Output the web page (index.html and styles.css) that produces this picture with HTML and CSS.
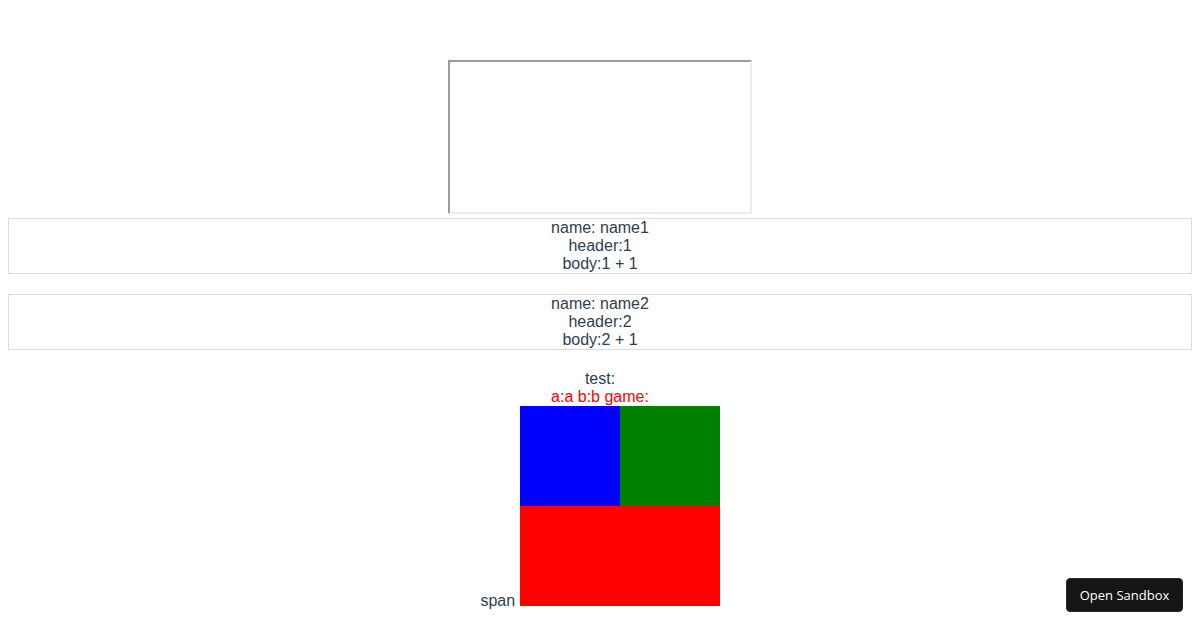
FILE: index.html
```html
<!DOCTYPE html>
<html>
<head>
<meta charset="utf-8">
<link rel="stylesheet" href="styles.css">
</head>
<body>
<div class="app">
  <div class="frame-line"><span class="frame"></span></div>
  <div class="card">
    <div>name: name1</div>
    <div>header:1</div>
    <div>body:1 + 1</div>
  </div>
  <div class="card">
    <div>name: name2</div>
    <div>header:2</div>
    <div>body:2 + 1</div>
  </div>
  <div class="test">test:</div>
  <div class="red-text">a:a b:b game:</div>
  <div class="squares-line"><span>span</span> <div class="squares"><div class="row"><div class="blue"></div><div class="green"></div></div><div class="red"></div></div></div>
</div>
<button class="sandbox">Open Sandbox</button>
</body>
</html>
```
FILE: styles.css
```css
html, body { background: #fff; }
body {
  margin: 0;
  padding: 60px 8px 8px;
  font-family: "Liberation Sans", Arial, sans-serif;
  font-size: 16px;
  line-height: 18px;
  color: #2c3e50;
}
.app {
  text-align: center;
}
.frame-line {
  height: 158px;
}
.frame {
  display: inline-block;
  box-sizing: border-box;
  width: 304px;
  height: 154px;
  border-style: solid;
  border-width: 2px;
  border-color: #9a9a9a #ececec #ececec #9a9a9a;
  vertical-align: top;
}
.card {
  border: 1px solid #dcdcdc;
  margin-bottom: 20px;
}
.red-text { color: #ff0000; }
.squares {
  display: inline-block;
  width: 200px;
  height: 200px;
  overflow: hidden;
  vertical-align: baseline;
}
.row { display: flex; height: 100px; }
.blue { width: 100px; height: 100px; background: #0000ff; }
.green { width: 100px; height: 100px; background: #008000; }
.red { width: 200px; height: 100px; background: #ff0000; }
.sandbox {
  position: fixed;
  right: 17px;
  bottom: 18px;
  width: 117px;
  height: 34px;
  background: #151515;
  color: #fff;
  border: 1px solid #2a2a2a;
  border-radius: 4px;
  font-family: "Open Sans", sans-serif;
  font-size: 13px;
  font-weight: 500;
  padding: 0;
}
```
